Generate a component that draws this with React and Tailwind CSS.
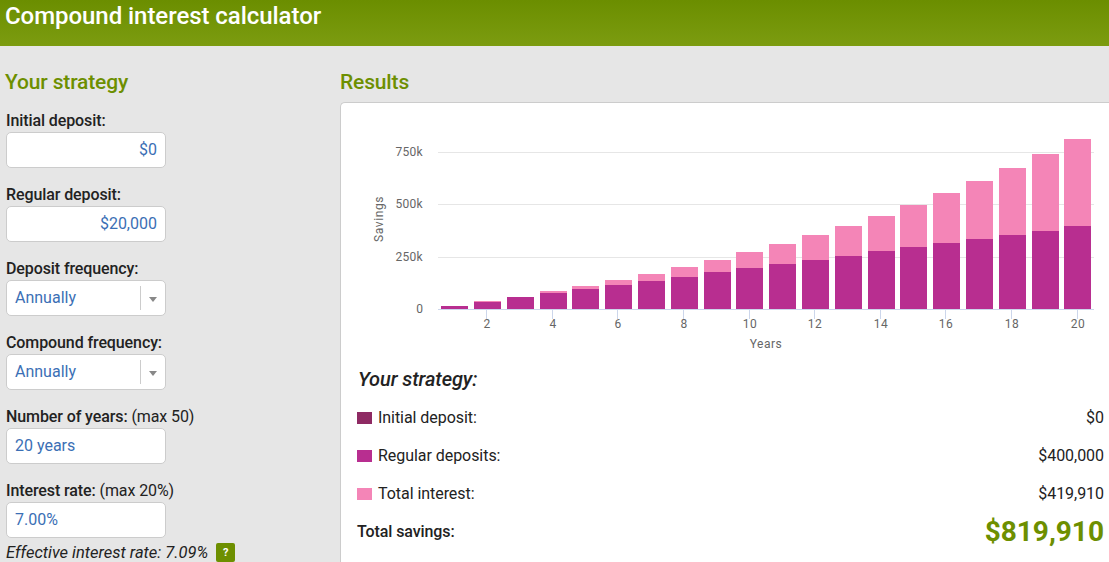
import React from 'react';

// dark = regular deposits top, total = top of the interest stack (chart pixels)
const bars = [
    [441, 306, 306], [474, 302, 301], [507, 297, 297], [540, 293, 291], [572, 289, 286],
    [605, 285, 280], [638, 281, 274], [671, 277, 267], [704, 272, 260], [736, 268, 252],
    [769, 264, 244], [802, 260, 235], [835, 256, 226], [868, 251, 216], [900, 247, 205],
    [933, 243, 193], [966, 239, 181], [999, 235, 168], [1032, 231, 154], [1064, 226, 139],
];

const xTicks = [[2, 486], [4, 552], [6, 617], [8, 683], [10, 749], [12, 814], [14, 880], [16, 945], [18, 1011], [20, 1077]];
const yTicks = [['750k', 152], ['500k', 204], ['250k', 257]];

// chart svg sits at page x 341, y 103
const Chart = () => (
    <svg width="768" height="256" viewBox="341 103 768 256" className="block" style={{ fontFamily: 'Roboto, sans-serif' }}>
        {yTicks.map(([label, y]) => (
            <g key={label}>
                <line x1="438" x2="1094" y1={y + 0.5} y2={y + 0.5} stroke="#e6e6e6" />
                <text x="423" y={y + 4} textAnchor="end" fontSize="12" letterSpacing="0.3" fill="#666666">{label}</text>
            </g>
        ))}
        <text x="423" y="313" textAnchor="end" fontSize="12" fill="#666666">0</text>
        <text transform="translate(383 242) rotate(-90)" fontSize="12" letterSpacing="0.6" fill="#666666">Savings</text>

        {bars.map(([x, dark, total]) => (
            <g key={x}>
                <rect x={x} y={total} width="27" height={dark - total} fill="#f485b7" />
                <rect x={x} y={dark} width="27" height={309 - dark} fill="#b82e90" />
            </g>
        ))}

        <line x1="438" x2="1094" y1="309.5" y2="309.5" stroke="#ccd6eb" />
        {xTicks.map(([label, x]) => (
            <g key={label}>
                <line x1={x + 0.5} x2={x + 0.5} y1="310" y2="319" stroke="#ccd6eb" />
                <text x={x + 1} y="328" textAnchor="middle" fontSize="12" letterSpacing="0.4" fill="#666666">{label}</text>
            </g>
        ))}
        <text x="766" y="348" textAnchor="middle" fontSize="12" letterSpacing="0.5" fill="#666666">Years</text>
    </svg>
);

const Field = ({ label, note, value, right }) => (
    <div className="mb-[14px]">
        <div className="h-6 leading-[26px] text-base font-medium tracking-[-0.1px] text-[#222222]">
            {label} {note && <span className="font-normal">{note}</span>}
        </div>
        <div className={`w-40 h-9 px-2 leading-[34px] bg-white border border-[#cccccc] rounded-[5px] text-base text-[#3b6fb5] ${right ? 'text-right' : 'text-left'}`}>
            {value}
        </div>
    </div>
);

const SelectField = ({ label, value }) => (
    <div className="mb-[14px]">
        <div className="h-6 leading-[26px] text-base font-medium tracking-[-0.1px] text-[#222222]">{label}</div>
        <div className="w-40 h-9 pl-2 flex items-center bg-white border border-[#cccccc] rounded-[5px] text-base text-[#3b6fb5]">
            <span className="flex-1">{value}</span>
            <span className="w-[25px] h-6 flex items-center justify-center border-l border-[#cccccc]">
                <span className="w-0 h-0 mt-0.5 border-x-[4.5px] border-x-transparent border-t-[5px] border-t-[#888888]"></span>
            </span>
        </div>
    </div>
);

const Row = ({ color, label, value }) => (
    <div className="h-[38px] flex items-center justify-between text-base tracking-[-0.05px] text-[#222222]">
        <span className="flex items-center">
            <span className="w-[15px] h-3 mr-1.5" style={{ backgroundColor: color }}></span>
            {label}
        </span>
        <span>{value}</span>
    </div>
);

const App = () => {
    return (
        <div className="w-[1109px] h-[562px] overflow-hidden bg-[#e6e6e6]" style={{ fontFamily: 'Roboto, sans-serif' }}>
            <div className="h-[46px] pl-[5px] bg-gradient-to-b from-[#6b8e00] to-[#7c9c10] text-white text-2xl font-medium tracking-[-0.05px] leading-8">
                Compound interest calculator
            </div>

            <div className="flex">
                <div className="w-[340px] shrink-0 pl-1.5 pt-[22px]">
                    <h2 className="h-[28px] -ml-px mb-3 leading-7 text-[21px] font-medium tracking-[-0.15px] text-[#6d8f00]">Your strategy</h2>
                    <Field label="Initial deposit:" value="$0" right />
                    <Field label="Regular deposit:" value="$20,000" right />
                    <SelectField label="Deposit frequency:" value="Annually" />
                    <SelectField label="Compound frequency:" value="Annually" />
                    <Field label="Number of years:" note="(max 50)" value="20 years" />
                    <div className="h-6 leading-[26px] text-base font-medium tracking-[-0.1px] text-[#222222]">
                        Interest rate: <span className="font-normal">(max 20%)</span>
                    </div>
                    <div className="w-40 h-9 px-2 leading-[34px] bg-white border border-[#cccccc] rounded-[5px] text-base text-[#3b6fb5]">7.00%</div>
                    <div className="mt-[5px] h-[19px] leading-[19px] flex items-center text-[16.5px] italic text-[#222222]">
                        Effective interest rate: 7.09%
                        <span className="ml-2 w-[19px] h-[19px] flex items-center justify-center rounded-[2px] bg-[#6d8f00] text-white text-[11px] not-italic font-bold">?</span>
                    </div>
                </div>

                <div className="flex-1 pt-[22px]">
                    <h2 className="h-[28px] mb-[6px] leading-7 text-[21px] font-medium tracking-[-0.15px] text-[#6d8f00]">Results</h2>
                    <div className="h-[600px] bg-white border-t border-l border-[#cccccc] rounded-tl-[5px]">
                        <Chart />
                        <div className="pl-4 pr-[5px]">
                            <div className="h-10 pl-px leading-10 text-xl italic font-medium tracking-[-0.1px] text-[#222222]">Your strategy:</div>
                            <Row color="#8e2a63" label="Initial deposit:" value="$0" />
                            <Row color="#b82e90" label="Regular deposits:" value="$400,000" />
                            <Row color="#f485b7" label="Total interest:" value="$419,910" />
                            <div className="h-[38px] flex items-center justify-between">
                                <span className="text-base font-medium tracking-[-0.1px] text-[#222222]">Total savings:</span>
                                <span className="text-[28px] font-bold text-[#6d8f00]">$819,910</span>
                            </div>
                        </div>
                    </div>
                </div>
            </div>
        </div>
    );
};

export default App;
